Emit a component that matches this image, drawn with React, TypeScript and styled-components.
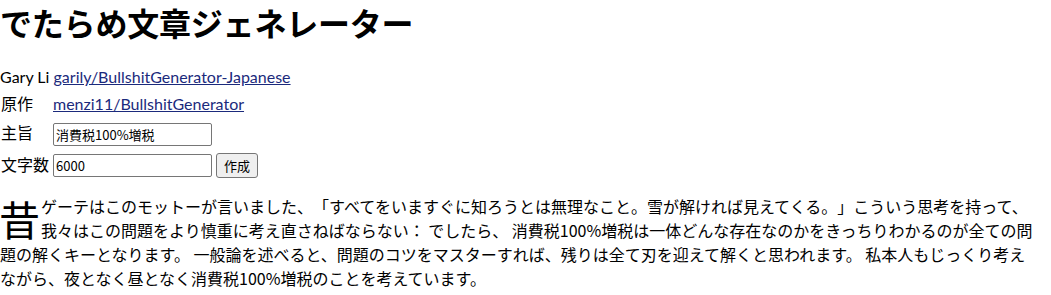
import React from "react";
import styled, { createGlobalStyle } from "styled-components";

const GlobalStyle = createGlobalStyle`
  body {
    margin: 0;
    background: #fff;
    color: #000;
    font-family: "Noto Sans CJK JP", sans-serif;
    font-size: 16px;
    text-spacing-trim: space-all;
  }
`;

const Title = styled.h1`
  margin: 0 0 22px;
  font-size: 32px;
  line-height: 44px;
  font-weight: bold;
  font-family: "Noto Sans CJK JP", sans-serif;
  letter-spacing: -0.2px;
`;

const Credit = styled.div`
  line-height: 22px;
  margin-bottom: 4px;
  font-family: "Lato", "Noto Sans CJK JP", sans-serif;
`;

const Link = styled.a`
  color: #1b2a7c;
  text-decoration: underline;
  font-family: "Lato", "Noto Sans CJK JP", sans-serif;
`;

const FormTable = styled.div`
  display: grid;
  grid-template-columns: 53px auto;
  row-gap: 7px;
  align-items: start;
`;

const Label = styled.span`
  font-family: "Noto Sans CJK JP", sans-serif;
  line-height: 22px;
  padding-left: 1px;
`;

const Field = styled.div<{ $pad?: number }>`
  display: flex;
  align-items: center;
  gap: 4px;
  padding-top: ${({ $pad }) => $pad ?? 0}px;
`;

const TextInput = styled.input`
  width: 159px;
  height: 23px;
  box-sizing: border-box;
  border: 1px solid #767676;
  border-radius: 2px;
  padding: 1px 2px;
  font-size: 13px;
  font-family: "Noto Sans CJK JP", sans-serif;
  color: #000;
`;

const Button = styled.button`
  height: 25px;
  width: 42px;
  box-sizing: border-box;
  border: 1px solid #767676;
  border-radius: 3px;
  background: #efefef;
  font-size: 13px;
  font-family: "Noto Sans CJK JP", sans-serif;
  padding: 0;
`;

const Article = styled.p`
  margin: 16px 0 0;
  font-family: "Noto Sans CJK JP", sans-serif;
  font-size: 16px;
  line-height: 24px;
  padding-right: 12px;
`;

const DropCap = styled.span`
  float: left;
  font-size: 41px;
  line-height: 44px;
  margin: 2px 1px 0 -1px;
`;

export default function App() {
  return (
    <>
      <GlobalStyle />
      <Title>でたらめ文章ジェネレーター</Title>
      <Credit>
        Gary Li <Link href="#">garily/BullshitGenerator-Japanese</Link>
      </Credit>
      <FormTable>
        <Label>原作</Label>
        <Field $pad={2}>
          <Link href="#">menzi11/BullshitGenerator</Link>
        </Field>
        <Label>主旨</Label>
        <Field $pad={2}>
          <TextInput defaultValue="消費税100%増税" />
        </Field>
        <Label>文字数</Label>
        <Field>
          <TextInput defaultValue="6000" />
          <Button>作成</Button>
        </Field>
      </FormTable>
      <Article>
        <DropCap>昔</DropCap>
        ゲーテはこのモットーが言いました、「すべてをいますぐに知ろうとは無理なこと。雪が解ければ見えてくる。」こういう思考を持って、
        我々はこの問題をより慎重に考え直さねばならない： でしたら、 消費税100%増税は一体どんな存在なのかをきっちりわかるのが全ての問題の解くキーとなります。
        一般論を述べると、問題のコツをマスターすれば、残りは全て刃を迎えて解くと思われます。 私本人もじっくり考えながら、夜となく昼となく消費税100%増税のことを考えています。
      </Article>
    </>
  );
}
